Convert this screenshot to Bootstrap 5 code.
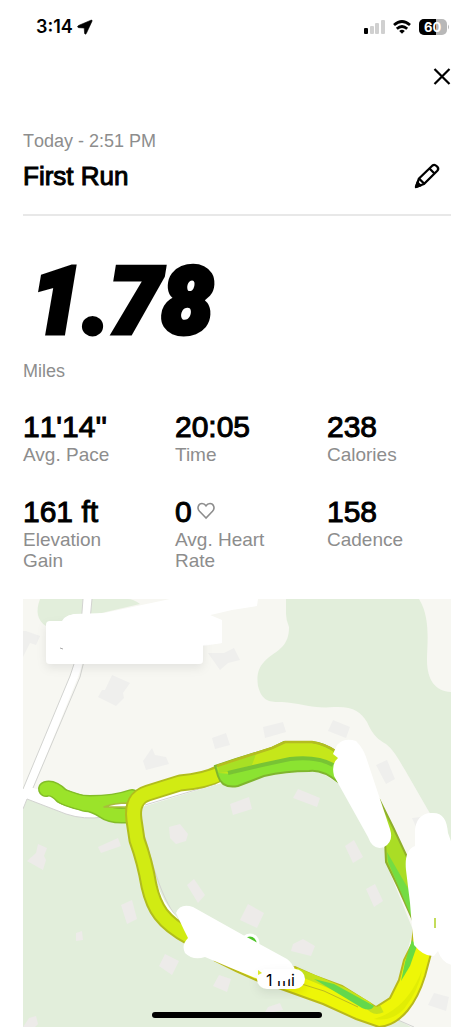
<!DOCTYPE html>
<html lang="en">
<head>
<meta charset="utf-8">
<meta name="viewport" content="width=device-width, initial-scale=1">
<title>First Run</title>
<link href="https://cdn.jsdelivr.net/npm/bootstrap@5.3.0/dist/css/bootstrap.min.css" rel="stylesheet">
<style>
  body { font-family: "Liberation Sans", Arial, sans-serif; color: #000; background: #fff; }
  .page-pad { padding-left: 23px; padding-right: 23px; }
  .status { height: 54px; padding-left: 36px; padding-right: 24px; }
  .clock { font: 600 18px/20px Inter, sans-serif; }
  .closebar { height: 44px; }
  .icon-btn { border: 0; background: none; padding: 0; color: #000; display: flex; }
  .run-head { margin-top: 31px; padding-bottom: 22px; border-bottom: 2px solid #e8e8e8; }
  .edit-btn { margin: 6px 9px 0 0; }
  .muted { color: #8d8d8d; }
  .run-date { font-size: 18px; line-height: 24px; font-kerning: none; }
  .medium { -webkit-text-stroke: 1px #000; font-kerning: none; }
  .run-title { font-size: 26px; line-height: 32px; margin-top: 7px; font-weight: 400; }
  .distance { font: italic 900 92px/96px Roboto, sans-serif; -webkit-text-stroke: 5px #000; margin-top: 38px; padding-left: 8px; }
  .unit { font-size: 18px; line-height: 22px; margin-top: 10px; }
  .stats { --bs-gutter-x: 28px; --bs-gutter-y: 30px; padding-top: 28px; }
  .stat-value { font-size: 30px; line-height: 34px; }
  .stat-name { font-size: 19px; line-height: 21px; padding-right: 16px; }
  .run-map { margin-top: 28px; }
  .home-bar { left: 32%; right: 32%; bottom: 9px; height: 6px; border-radius: 3px; background: #000; }
</style>
</head>
<body>
<header class="status d-flex align-items-center justify-content-between">
  <div class="d-flex align-items-center gap-1">
    <span class="clock">3:14</span>
    <svg width="16" height="16" viewBox="0 0 16 16" aria-hidden="true"><path d="M1.500 6.500 14 1.200Q15.500.7 15 2.200L9.300 14.500Q8.300 16 7.600 14.400L7.200 9 1.700 8.700Q-.500 8 1.500 6.500Z" stroke="#000" stroke-width=".6"/></svg>
  </div>
  <div class="d-flex align-items-center gap-2">
    <svg width="21" height="14" viewBox="0 0 21 14" aria-hidden="true"><rect y="8" width="4" height="6" rx="1"/><g fill="#d0d0d0"><rect x="6" y="6" width="4" height="8" rx="1"/><rect x="11" y="3" width="4" height="11" rx="1"/><rect x="17" width="4" height="14" rx="1"/></g></svg>
    <svg width="18" height="14" viewBox="0 0 18 14" fill="none" stroke="#000" stroke-width="2.800" aria-hidden="true"><path d="M1 5Q9-2 17 5M3.800 8.700Q9 4.300 14.200 8.700"/><path d="M6.200 10.900Q9 8.700 11.800 10.900L9 13.800Z" fill="#000" stroke="none"/></svg>
    <svg width="31" height="16" viewBox="0 0 31 16" role="img" aria-label="Battery 60 percent"><defs><clipPath id="cell"><rect width="28" height="16" rx="5"/></clipPath></defs><g clip-path="url(#cell)"><rect width="28" height="16" fill="#b8b8b8"/><rect width="17" height="16"/></g><path d="M29 5.500Q31 8 29 10.500Z" fill="#b8b8b8"/><text x="5" y="13" font-family="Inter" font-weight="700" font-size="13" fill="#fff">60</text></svg>
  </div>
</header>

<main class="page-pad">
  <div class="closebar d-flex align-items-center justify-content-end">
    <button class="icon-btn" type="button" aria-label="Close"><svg width="18" height="18" viewBox="0 0 18 18" stroke="#000" stroke-width="2.200"><path d="M1.500 2 16.500 17M16.500 2 1.500 17"/></svg></button>
  </div>

  <section class="run-head">
    <div class="run-date muted">Today - 2:51 PM</div>
    <div class="d-flex align-items-center justify-content-between">
      <h1 class="run-title medium mb-0">First Run</h1>
      <button class="icon-btn edit-btn" type="button" aria-label="Edit name"><svg width="30" height="30" viewBox="0 0 30 30" fill="none" stroke="#000" stroke-width="2.300" stroke-linejoin="round"><path d="M4 26 7 17.500 20.500 4.500Q22.500 3 24.500 5L25.500 6Q27 8 25.300 9.800L12 23Z"/><path d="M17.500 7.500 22.500 12.500M7 17.500 12.500 23"/><path d="M4 26 5.500 21.500 8.500 24.500Z" fill="#000"/></svg></button>
    </div>
  </section>

  <div class="distance">1.78</div>
  <div class="unit muted">Miles</div>

  <section class="row stats">
    <div class="col-4"><div class="stat-value medium">11'14''</div><div class="stat-name muted">Avg. Pace</div></div>
    <div class="col-4"><div class="stat-value medium">20:05</div><div class="stat-name muted">Time</div></div>
    <div class="col-4"><div class="stat-value medium">238</div><div class="stat-name muted">Calories</div></div>
    <div class="col-4"><div class="stat-value medium">161 ft</div><div class="stat-name muted">Elevation Gain</div></div>
    <div class="col-4">
      <div class="stat-value medium d-flex align-items-center gap-1">0 <svg width="20" height="20" viewBox="0 0 20 20" fill="none" stroke="#8d8d8d" stroke-width="1.600" aria-hidden="true"><path d="M10 16 3.500 9.300C.5 6 2.500 1.500 6 1.500Q8.500 1.500 10 3.800 11.500 1.500 14 1.500C17.500 1.500 19.500 6 16.500 9.300Z"/></svg></div>
      <div class="stat-name muted">Avg. Heart Rate</div>
    </div>
    <div class="col-4"><div class="stat-value medium">158</div><div class="stat-name muted">Cadence</div></div>
  </section>

  <div class="run-map">
    <svg class="d-block w-100" viewBox="23 599 428 428" role="img" aria-label="Route map">
      <defs><filter id="soft" x="-20%" y="-30%" width="140%" height="180%"><feDropShadow dx="0" dy="4" stdDeviation="5" flood-opacity=".08"/></filter></defs>
      <rect x="23" y="599" width="428" height="428" fill="#f7f7f2"/>
      <!-- woods and lawns -->
      <g fill="#e2eedb">
        <path d="M40 599Q33 618 46 626L140 604Q133 599 128 599Z"/>
        <path d="M286 599V614Q286 620 289 627C289 645 280 649 268 658C256 668 257 678 258 686C262 702 270 702 282 702C300 703 313 709 334 707C353 706 361 712 367 722C373 736 379 740 386 744C394 750 400 762 405 770L428 810 451 848V692C435 691 427 680 427 660C427 645 431 618 419 599Z"/>
        <path d="M23 809 27 799 66 814Q84 820 130 817L145 805 232 780 290 770H318L340 785 385 850 388 868 413 930 405 960 390 1015 411 1027H23Z"/>
      </g>
      <!-- roads -->
      <path d="M83 599 81 625Q78 655 70 676L23 789V809L27 799 66 814Q84 820 104 817L145 806 228 781V768L130 790 90 805 33 788 78 677Q88 650 92 599Z" fill="#fff"/>
      <g fill="none" stroke="#d2d3d0" stroke-width="1">
        <path d="M83 599 81 625Q78 655 70 676L23 789M92 599Q88 650 80 677L33 788M23 809 27 799 66 814Q84 820 104 817M145 805 216 784M145 837C155 875 164 902 178 919"/>
        <path d="M398 1020 414 1027"/>
      </g>
      <path d="M142 830C152 870 157 896 177 917L181 925 164 914 142 870Z" fill="#fff"/>
      <!-- houses -->
      <g fill="#efefed">
        <path d="M26 631 40 636 36 645 30 643 23 657V631ZM112 675 130 683 123 693 124 698 116 706 98 697 102 690 105 690ZM152 748 155 755 166 757 169 764 146 770 143 761ZM212 738 226 733 230 745 215 749ZM208 653 224 653 234 648 240 660 228 663 220 670ZM263 727 283 722 286 732 265 738ZM333 720 350 727 346 738 328 731ZM376 765 387 760 395 779 386 784ZM412 818 421 817 417 829ZM434 993 449 997 446 1011 428 1005Z"/>
      </g>
      <g fill="#edebe9">
        <path d="M38 844 47 848 44 856 46 860 43 870 27 861 36 853ZM98 847 118 838 121 846 101 853ZM169 827 180 824 188 834 186 841 176 844 170 838ZM187 885 194 879 205 895 198 903ZM121 905 132 900 137 919 127 924ZM230 804 249 797 252 809 233 815ZM298 789 320 798 317 807 293 798ZM345 846 354 840 363 857 353 863ZM366 889 375 884 383 901 374 907ZM248 904 264 913 257 928 240 920ZM293 944 303 939 315 946 311 956 291 951ZM165 954 179 961 172 975 159 966ZM219 975 231 979 227 992 213 986ZM76 933 82 931 83 940 76 941ZM29 1018 36 1016 38 1024 35 1027H23ZM268 1007 280 1003 283 1010 264 1014Z"/>
      </g>
      <!-- run route, coloured by pace -->
      <g fill="none" stroke-linecap="round" stroke-linejoin="round">
        <g stroke="#83bd28" stroke-width="16"><path d="M46 789Q53 787 62 796 75 803 90 803 115 803 132 797"/><path d="M64 797 85 804Q93 804 104 811 112 817 130 815"/></g>
        <g stroke="#9be32a" stroke-width="13"><path d="M46 789Q53 787 62 796 75 803 90 803 115 803 132 797"/><path d="M64 797 85 804Q93 804 104 811 112 817 130 815"/></g>
        <path d="M104 807Q114 803 128 803L126 807 114 807Z" fill="#fff" stroke="#a8bd3c" stroke-width="1.500"/>
        <path d="M220 773Q205 781 180 783L148 793Q131 798 134 820L137 840Q145 862 149 886C154 908 162 922 190 937" stroke="#b1bd1d" stroke-width="17" stroke-linecap="butt"/>
        <path d="M222 773Q205 781 180 783L148 793Q131 798 134 820L137 840Q145 862 149 886C154 908 162 922 190 937" stroke="#d1eb13" stroke-width="13"/>
      </g>
      <path d="M215 766 236 759 272 748 284 742H312Q324 743 337 752L344 765 338 782Q322 769 309 771 286 771 264 776L238 786Q222 789 218 776Z" fill="#8be331" stroke="#7fb52e" stroke-width="2"/>
      <path d="M217 767 238 759 272 749 285 743H312Q325 745 338 755L338 762 330 765Q318 757 292 759L262 765 232 774 219 773Z" fill="#c5e71a"/>
      <path d="M218 767 238 760 256 754 252 765 228 772 219 773Z" fill="#a8e024"/>
      <path d="M217 766 238 759 272 748 285 742H312Q325 744 337 752" fill="none" stroke="#b4bd20" stroke-width="2.500"/>
      <path d="M228 773 262 765 290 759Q317 756 333 765" fill="none" stroke="#78c434" stroke-width="4"/>
      <path d="M379 799 393 827 408 859 415 925 398 887 386 862 385 840Z" fill="#aadd25" stroke="#8faf2b" stroke-width="2"/>
      <path d="M387 852 402 878 412 895V918L388 862Z" fill="#74dc43"/>
      <path d="M214 960 235 966 270 975 295 967 315 976 342 986 376 1007 390 998 399 980 404 960 412 944 414 925 432 950 425 976C417 1002 402 1025 379 1027L356 1019 323 1004 284 990 256 980 236 971Z" fill="#eef607" stroke="#b9b91b" stroke-width="2"/>
      <path d="M296 971 318 980 344 991 368 1005Q374 1013 382 1009" fill="none" stroke="#c6e21a" stroke-width="7"/>
      <path d="M314 979 334 984 374 1006Q371 1012 362 1008Z" fill="#64d84c"/>
      <path d="M292 981 324 991 358 1007" fill="none" stroke="#bcbc20" stroke-width="1"/>
      <path d="M412 940 417 946 410 966 401 981 405 962Z" fill="#68dc42"/>
      <path d="M422 970C413 994 398 1012 374 1019Q391 1022 404 1009 419 990 422 970Z" fill="#e1ed05"/>
      <circle cx="250" cy="943" r="8" fill="#4fc528" stroke="#fff" stroke-width="3"/>
      <!-- hidden places -->
      <g fill="#fff">
        <path d="M337 745Q344 737 356 741 363 748 366 757L390 829Q394 842 384 847 373 851 368 837L334 776Q331 764 338 758L333 754Z"/>
        <path d="M415 835C414 820 422 812 433 813 443 813 447 820 448 833L452 844V965Q442 963 438 951L434 956Q424 957 414 945 412 929 410 903L406 870Q404 850 415 846Z"/>
        <path d="M176 913Q180 903 193 907L243 935 287 959Q298 967 289 977L258 979 231 968 205 957Q193 961 185 953 181 945 188 938L184 930Z"/>
        <path d="M62 626Q62 616 74 614L104 613 170 599H258L257 606 232 610 202 617 222 620V643L203 646Z"/>
      </g>
      <path d="M435 918V928" fill="none" stroke="#c3dc5a" stroke-width="2"/>
      <rect x="46" y="621" width="157" height="43" rx="4" fill="#fff" filter="url(#soft)"/>
      <path d="M62 628V621Q65 614 80 614H203V612L222 620V643L203 645V650H62Z" fill="#fff"/>
      <path d="M60 648 63 649" stroke="#aaa" stroke-width="1"/>
      <path d="M257 978 261 968 287 964Q299 966 292 974Z" fill="#fff"/>
      <g filter="url(#soft)"><rect x="257" y="969" width="48" height="20" rx="10" fill="#fff"/></g>
      <path d="M258 970 262 973 258 975Z" fill="#dce92a"/>
      <text x="266" y="986" font-family="Inter, sans-serif" font-size="16">1 mi</text>
      <path d="M276 972H291V978L286 981 277 981Z" fill="#fff"/>
    </svg>
  </div>
</main>
<div class="home-bar position-fixed"></div>
<script src="https://cdn.jsdelivr.net/npm/bootstrap@5.3.0/dist/js/bootstrap.bundle.min.js"></script>
</body>
</html>
